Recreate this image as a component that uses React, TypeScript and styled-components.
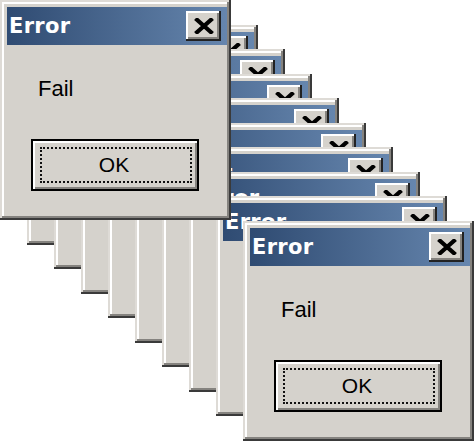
import styled, { createGlobalStyle } from "styled-components"

const GlobalStyle = createGlobalStyle`
    html, body {
        margin: 0;
        padding: 0;
        background: #ffffff;
    }
`

const Desktop = styled.div`
    position: relative;
    width: 474px;
    height: 442px;
    background: #ffffff;
    overflow: hidden;
`

const Window = styled.div<{ $x: number; $y: number; $z: number }>`
    position: absolute;
    left: ${props => props.$x}px;
    top: ${props => props.$y}px;
    z-index: ${props => props.$z};
    width: 231px;
    height: 220px;
    box-sizing: border-box;
    padding: 7px 4px 4px 7px;
    background: #d5d2cc;
    box-shadow:
        inset -2px -2px 0 #3a3a3a,
        inset 2px 2px 0 #dedbd6,
        inset -4px -4px 0 #85837f,
        inset 4px 4px 0 #ffffff;
    display: flex;
    flex-direction: column;
`

const TitleBar = styled.div`
    flex: none;
    height: 38px;
    display: flex;
    align-items: center;
    justify-content: space-between;
    padding: 0 6px 0 2px;
    background: linear-gradient(to right, #2f4b72, #6686ae);
`

const Title = styled.span`
    font-family: "DejaVu Sans", Verdana, sans-serif;
    font-weight: bold;
    font-size: 21px;
    line-height: 24px;
    color: #ffffff;
    letter-spacing: 0.3px;
`

const CloseButton = styled.div`
    width: 35px;
    height: 30px;
    box-sizing: border-box;
    padding-bottom: 1px;
    background: #d5d2cc;
    box-shadow:
        inset -2px -2px 0 #222222,
        inset 2px 2px 0 #ffffff,
        inset -4px -4px 0 #85837f;
    display: flex;
    align-items: center;
    justify-content: center;
`

const Body = styled.div`
    flex: 1;
    display: flex;
    flex-direction: column;
    align-items: flex-start;
    padding: 32px 0 0 24px;
`

const Message = styled.p`
    margin: 0 0 0 7px;
    font-family: "Liberation Sans", Arial, sans-serif;
    font-size: 22px;
    line-height: 24px;
    color: #000000;
`

const OkButton = styled.div`
    margin-top: 38px;
    width: 168px;
    height: 52px;
    box-sizing: border-box;
    border: 2px solid #000000;
    background: #d5d2cc;
    box-shadow:
        inset 2px 2px 0 #ffffff,
        inset -2px -2px 0 #85837f;
    padding: 6px 5px 6px 7px;
    display: flex;
`

const Focus = styled.div`
    flex: 1;
    border: 2px dotted #111111;
    display: flex;
    align-items: center;
    justify-content: center;
    padding-right: 4px;
    font-family: "Liberation Sans", Arial, sans-serif;
    font-size: 21px;
    color: #000000;
`

function CloseGlyph() {
    return (
        <svg width="20" height="16" viewBox="0 0 20 16">
            <path d="M1.5 0.5 L18.5 15.5 M18.5 0.5 L1.5 15.5" stroke="#000" strokeWidth="4.2" fill="none" />
        </svg>
    )
}

function ErrorDialog({ x, y, z }: { x: number; y: number; z: number }) {
    return (
        <Window $x={x} $y={y} $z={z}>
            <TitleBar>
                <Title>Error</Title>
                <CloseButton>
                    <CloseGlyph />
                </CloseButton>
            </TitleBar>
            <Body>
                <Message>Fail</Message>
                <OkButton>
                    <Focus>OK</Focus>
                </OkButton>
            </Body>
        </Window>
    )
}

// the first dialog sits on top, the trail of copies stacks down to the right
const trail = [1, 2, 3, 4, 5, 6, 7, 8, 9]

export default function App() {
    return (
        <>
            <GlobalStyle />
            <Desktop>
                {trail.map(k => (
                    <ErrorDialog key={k} x={k * 27} y={Math.round(k * 24.5)} z={k} />
                ))}
                <ErrorDialog x={0} y={0} z={20} />
            </Desktop>
        </>
    )
}
